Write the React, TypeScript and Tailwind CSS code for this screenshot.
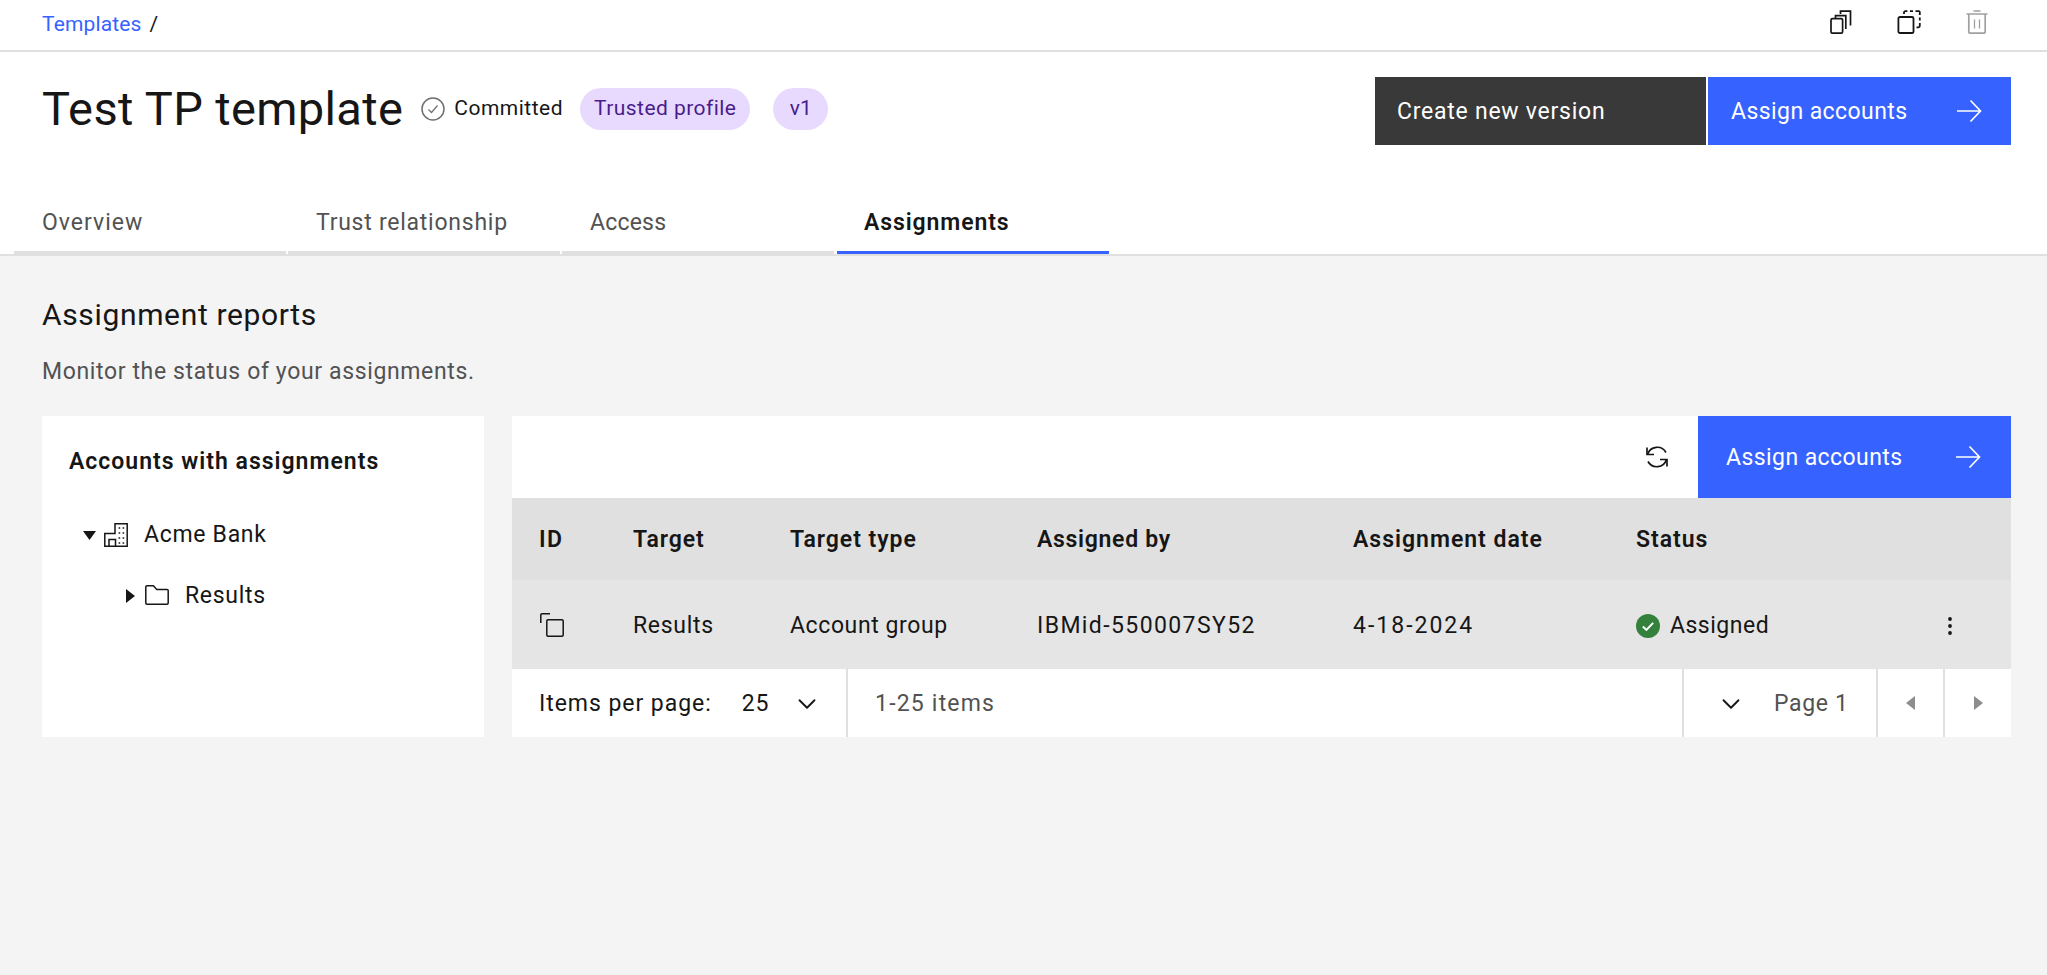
import { ChevronDown } from "lucide-react";

const blue = "bg-[#3662ff]";

function ArrowRight({ className }: { className?: string }) {
  return (
    <svg className={className} viewBox="0 0 26 26" fill="none" stroke="currentColor" strokeWidth="1.7">
      <path d="M1 13h23M14.5 2.5 24.5 13l-10 10.5" />
    </svg>
  );
}

function CopyLayers() {
  return (
    <svg className="h-6 w-[22px]" viewBox="0 0 22 24" fill="none" stroke="#161616" strokeWidth="1.7">
      <rect x="1" y="8.6" width="11.6" height="14.6" rx="1.4" />
      <path d="M5.5 8V5.6h10.3V19" />
      <path d="M10.5 4V1.2h10V15.5" />
    </svg>
  );
}

function Duplicate() {
  return (
    <svg className="h-6 w-6" viewBox="0 0 24 24" fill="none" stroke="#161616" strokeWidth="1.8">
      <path d="M3 7h12a1.5 1.5 0 0 1 1.5 1.5v13.3A1.4 1.4 0 0 1 15 23H3a1.6 1.6 0 0 1-1.6-1.6V8.6A1.6 1.6 0 0 1 3 7Z" />
      <path d="M7 4V2.6A1.4 1.4 0 0 1 8.4 1.2h2M13 1.2h3M18.5 1.2h3.3a1 1 0 0 1 1 1V5M22.8 7.5v3M22.8 13v3a1.4 1.4 0 0 1-1.3 1.3h-2" />
    </svg>
  );
}

function Trash() {
  return (
    <svg className="h-6 w-[22px]" viewBox="0 0 22 24" fill="none" stroke="#a0a0a0" strokeWidth="1.7">
      <path d="M0.5 4h21M7.5 1h7" />
      <path d="M2.8 4v18a1.2 1.2 0 0 0 1.2 1.2h14a1.2 1.2 0 0 0 1.2-1.2V4" />
      <path d="M8.5 9.5v9M13.5 9.5v9" strokeWidth="1.3" />
    </svg>
  );
}

function CommittedIcon() {
  return (
    <svg className="h-6 w-6" viewBox="0 0 24 24" fill="none" stroke="#6f6f6f" strokeWidth="1.5">
      <circle cx="12" cy="12" r="11" />
      <path d="m7.5 12.5 3 3 6-7" strokeWidth="1.2" />
    </svg>
  );
}

function Building() {
  return (
    <svg className="h-6 w-6" viewBox="0 0 24 24" fill="none" stroke="#161616" strokeWidth="1.5">
      <path d="M.8 23.2h22.4V.8H11v9.6H.8Z" />
      <path d="M5 23v-6.5h6.5V23" />
      <path d="M14.6 5h1.6M18.6 5h1.6M14.6 10h1.6M18.6 10h1.6M14.6 15h1.6M18.6 15h1.6M14.6 20h1.6M18.6 20h1.6" strokeWidth="1.5" />
    </svg>
  );
}

function Folder() {
  return (
    <svg className="mb-[3px] h-[20px] w-6" viewBox="0 0 24 20" fill="none" stroke="#161616" strokeWidth="1.5">
      <path d="M.8 2A1.2 1.2 0 0 1 2 .8h6.4l3.4 3.6H22a1.2 1.2 0 0 1 1.2 1.2V18A1.2 1.2 0 0 1 22 19.2H2A1.2 1.2 0 0 1 .8 18Z" />
    </svg>
  );
}

function CopyRow() {
  return (
    <svg className="h-6 w-6" viewBox="0 0 24 24" fill="none" stroke="#161616" strokeWidth="1.5">
      <rect x="6.8" y="6.8" width="16.4" height="16.4" rx="1.2" />
      <path d="M.8 10V2A1.2 1.2 0 0 1 2 .8h8" />
    </svg>
  );
}

function Renew() {
  return (
    <svg className="h-[24px] w-[24px]" viewBox="0 0 24 24" fill="none" stroke="#161616" strokeWidth="1.7">
      <path d="M2.6 9.5A10 10 0 0 1 21 7.5" />
      <path d="M21.4 14.5A10 10 0 0 1 3 16.5" />
      <path d="M2 2.5v7h7M22 21.5v-7h-7" />
    </svg>
  );
}

function Assigned() {
  return (
    <svg className="h-6 w-6" viewBox="0 0 24 24">
      <circle cx="12" cy="12" r="12" fill="#34813b" />
      <path d="m6.8 12.5 3.6 3.4 6.8-7" fill="none" stroke="#fff" strokeWidth="2" />
    </svg>
  );
}

function Kebab() {
  return (
    <svg className="h-[18px] w-[6px]" viewBox="0 0 6 18" fill="#161616">
      <circle cx="3" cy="2" r="1.9" />
      <circle cx="3" cy="9" r="1.9" />
      <circle cx="3" cy="16" r="1.9" />
    </svg>
  );
}

function Caret({ dir, className }: { dir: "down" | "left" | "right"; className?: string }) {
  const d = dir === "down" ? "M0 0h13L6.5 9Z" : dir === "right" ? "M0 0l9 7-9 7Z" : "M9 0l-9 7 9 7Z";
  const box = dir === "down" ? "0 0 13 9" : "0 0 9 14";
  return (
    <svg className={className} viewBox={box} fill="currentColor">
      <path d={d} />
    </svg>
  );
}

const tabs = [
  { label: "Overview", spacing: "tracking-[1px]" },
  { label: "Trust relationship", spacing: "tracking-[0.75px]" },
  { label: "Access", spacing: "tracking-[0.2px]" },
  { label: "Assignments", spacing: "tracking-[0.9px]" },
];
const columns = [
  { label: "ID", spacing: "tracking-[1.5px]" },
  { label: "Target", spacing: "tracking-[0.9px]" },
  { label: "Target type", spacing: "tracking-[0.95px]" },
  { label: "Assigned by", spacing: "tracking-[0.7px]" },
  { label: "Assignment date", spacing: "tracking-[1px]" },
  { label: "Status", spacing: "tracking-[0.95px]" },
];
const tableGrid = "grid grid-cols-[121px_157px_247px_316px_283px_1fr]";

export default function App() {
  return (
    <div className="min-h-screen bg-[#f4f4f4] text-[23px] text-[#161616] [font-family:Roboto,sans-serif]">
      <div className="flex h-[52px] items-center justify-between border-b-2 border-[#e0e0e0] bg-white pl-[42px] pr-[59px]">
        <div className="flex items-center gap-[8px] text-[21px] tracking-[0.15px]">
          <span className="text-[#3662ff]">Templates</span>
          <span>/</span>
        </div>
        <div className="flex items-center gap-[45px] pb-[6px]">
          <CopyLayers />
          <Duplicate />
          <Trash />
        </div>
      </div>

      <div className="border-b-2 border-[#e0e0e0] bg-white">
        <div className="flex h-[144px] items-start justify-between pl-[42px] pr-[36px] pt-[25px]">
          <div className="mt-[1px] flex items-center">
            <h1 className="text-[47px] leading-[62px] font-normal tracking-[0.35px]">Test TP template</h1>
            <div className="ml-[18px] flex items-center gap-[9px] text-[21px] tracking-[0.5px]">
              <CommittedIcon />
              <span>Committed</span>
            </div>
            <span className="ml-[17px] flex h-[42px] items-center rounded-full bg-[#e8daff] px-[14px] text-[21px] tracking-[0.44px] text-[#491d8b]">
              Trusted profile
            </span>
            <span className="ml-[23px] flex h-[42px] w-[55px] items-center justify-center rounded-full bg-[#e8daff] text-[21px] text-[#491d8b]">
              v1
            </span>
          </div>
          <div className="flex h-[68px] gap-[2px] text-white">
            <button className="flex w-[331px] items-center bg-[#393939] pl-[22px] pt-[3px] text-left tracking-[0.75px]">Create new version</button>
            <button className={`flex w-[303px] items-center justify-between ${blue} pl-[23px] pr-[29px] tracking-[0.43px]`}>
              <span className="pt-[3px]">Assign accounts</span>
              <ArrowRight className="h-[26px] w-[26px]" />
            </button>
          </div>
        </div>
        <div className="flex gap-[2px] pl-[14px]">
          {tabs.map((tab, i) => (
            <div
              key={tab.label}
              className={
                i === 3
                  ? `ml-px flex h-[58px] w-[272px] items-center border-b-[3px] border-[#3662ff] pl-[27px] font-semibold ${tab.spacing}`
                  : `flex h-[58px] w-[272px] items-center border-b-[3px] border-[#e0e0e0] pl-[28px] text-[#525252] ${tab.spacing}`
              }
            >
              {tab.label}
            </div>
          ))}
        </div>
      </div>

      <div className="pl-[42px] pr-[36px] pt-[39px]">
        <h2 className="text-[30px] leading-[40px] font-normal tracking-[0.65px]">Assignment reports</h2>
        <p className="mt-[21px] leading-[32px] tracking-[0.63px] text-[#525252]">Monitor the status of your assignments.</p>

        <div className="mt-[28px] flex gap-[28px]">
          <div className="h-[321px] w-[442px] bg-white pl-[27px]">
            <div className="pt-[31px] font-semibold leading-[30px] tracking-[1px]">Accounts with assignments</div>
            <div className="mt-[46px] flex h-[24px] items-center pl-[14px]">
              <Caret dir="down" className="mr-[8px] w-[13px]" />
              <Building />
              <span className="ml-[16px] tracking-[0.7px]">Acme Bank</span>
            </div>
            <div className="mt-[37px] flex h-[24px] items-center pl-[57px]">
              <Caret dir="right" className="mr-[10px] w-[9px]" />
              <Folder />
              <span className="ml-[16px] tracking-[0.7px]">Results</span>
            </div>
          </div>

          <div className="w-[1499px]">
            <div className="flex h-[82px] items-center justify-end bg-white">
              <Renew />
              <button className={`ml-[29px] flex h-full w-[313px] items-center justify-between ${blue} pl-[28px] pr-[30px] tracking-[0.43px] text-white`}>
                <span className="pt-[2px]">Assign accounts</span>
                <ArrowRight className="h-[26px] w-[26px]" />
              </button>
            </div>
            <div className={`${tableGrid} h-[82px] items-center bg-[#e0e0e0] pt-[3px] font-semibold`}>
              {columns.map((col, i) => (
                <div key={col.label} className={i === 0 ? `pl-[27px] ${col.spacing}` : col.spacing}>
                  {col.label}
                </div>
              ))}
            </div>
            <div className={`${tableGrid} h-[89px] items-center bg-[#e5e5e5] pt-[3px]`}>
              <div className="pb-[3px] pl-[28px]">
                <CopyRow />
              </div>
              <div className="tracking-[0.7px]">Results</div>
              <div className="tracking-[0.6px]">Account group</div>
              <div className="tracking-[1.4px]">IBMid-550007SY52</div>
              <div className="tracking-[2px]">4-18-2024</div>
              <div className="flex items-center justify-between pr-[58px]">
                <div className="flex items-center gap-[10px] tracking-[0.5px]">
                  <Assigned />
                  Assigned
                </div>
                <Kebab />
              </div>
            </div>
            <div className="flex h-[68px] items-stretch bg-white">
              <div className="flex w-[336px] items-center border-r-2 border-[#e0e0e0] pl-[27px] pt-[2px] tracking-[0.95px]">
                Items per page:
                <span className="ml-[30px]">25</span>
                <ChevronDown className="ml-[23px] h-[30px] w-[30px]" strokeWidth={1.5} />
              </div>
              <div className="flex flex-1 items-center pl-[27px] pt-[2px] tracking-[1.2px] text-[#525252]">1-25 items</div>
              <div className="flex w-[194px] items-center border-l-2 border-[#e0e0e0] pl-[32px] pt-[2px]">
                <ChevronDown className="h-[30px] w-[30px]" strokeWidth={1.5} />
                <span className="ml-[28px] tracking-[0.65px] text-[#525252]">Page 1</span>
              </div>
              <div className="flex w-[67px] items-center justify-center border-l-2 border-[#e0e0e0] text-[#8d8d8d]">
                <Caret dir="left" className="w-[9px]" />
              </div>
              <div className="flex w-[68px] items-center justify-center border-l-2 border-[#e0e0e0] text-[#8d8d8d]">
                <Caret dir="right" className="w-[9px]" />
              </div>
            </div>
          </div>
        </div>
      </div>
    </div>
  );
}
